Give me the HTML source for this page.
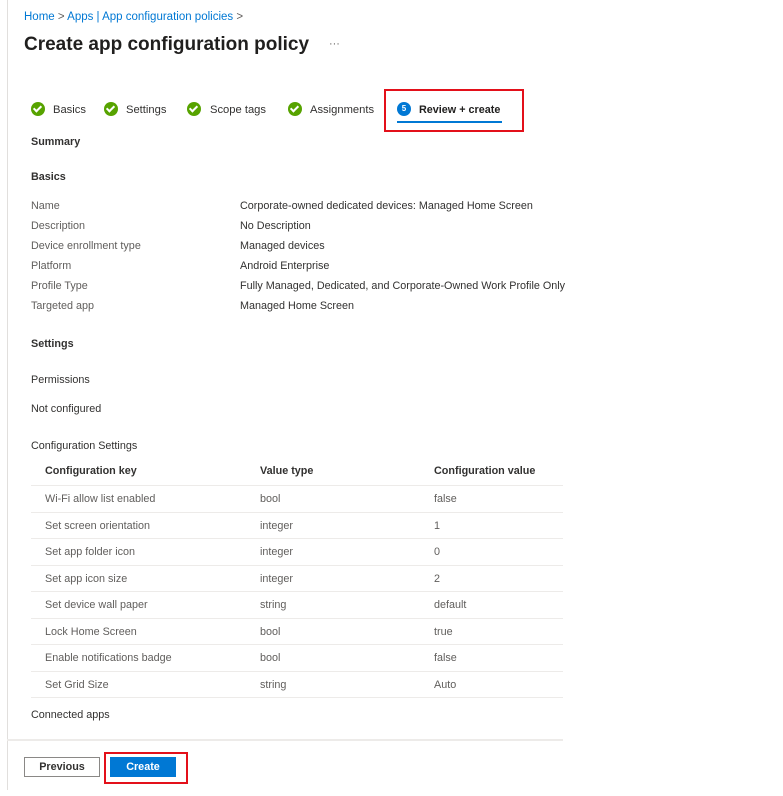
<!DOCTYPE html><html><head><style>
body{margin:0;width:783px;height:796px;background:#fff;font-family:"Liberation Sans",sans-serif;color:#323130;position:relative;overflow:hidden}
.a{position:absolute;white-space:nowrap;font-size:10.8px;line-height:14px}
.b{font-weight:bold}
.g{color:#605e5c}
.chk{position:absolute;width:14px;height:14px;border-radius:50%;background:#57a300}
.chk:after{content:"";position:absolute;left:4px;top:2px;width:3px;height:6px;border:solid #fff;border-width:0 2px 2px 0;transform:rotate(45deg)}
.line{position:absolute;height:1px;background:#edebe9;left:31px;width:532px}
.t{font-size:11.2px}
</style></head><body>
<div style="position:absolute;left:7px;top:0;width:1px;height:790px;background:#e1dfdd"></div>
<div class="a" style="left:24px;top:10px;font-size:11.5px;color:#0078d4">Home <span style="color:#605e5c">&gt;</span> Apps | App configuration policies <span style="color:#605e5c">&gt;</span></div>
<div class="a" style="left:24px;top:33px;font-size:19px;line-height:24px;font-weight:600;color:#201f1e">Create app configuration policy</div>
<div class="a" style="left:329px;top:37px;color:#605e5c">···</div>

<div class="chk" style="left:31px;top:102px"></div><div class="a t" style="left:53px;top:103px">Basics</div>
<div class="chk" style="left:104px;top:102px"></div><div class="a t" style="left:126px;top:103px">Settings</div>
<div class="chk" style="left:187px;top:102px"></div><div class="a t" style="left:210px;top:103px">Scope tags</div>
<div class="chk" style="left:288px;top:102px"></div><div class="a t" style="left:310px;top:103px">Assignments</div>
<div style="position:absolute;left:397px;top:102px;width:14px;height:14px;border-radius:50%;background:#0078d4;color:#fff;font-size:8px;line-height:14px;text-align:center;font-weight:bold">5</div>
<div class="a t" style="left:419px;top:103px;font-weight:bold;color:#201f1e;font-size:10.8px">Review + create</div>
<div style="position:absolute;left:397px;top:121px;width:105px;height:2px;background:#0078d4"></div>
<div style="position:absolute;left:384px;top:89px;width:140px;height:43px;border:2px solid #e3101a;box-sizing:border-box"></div>

<div class="a b" style="left:31px;top:135px">Summary</div>
<div class="a b" style="left:31px;top:170px">Basics</div>
<div class="a g" style="left:31px;top:199px">Name</div><div class="a" style="left:240px;top:199px">Corporate-owned dedicated devices: Managed Home Screen</div>
<div class="a g" style="left:31px;top:219px">Description</div><div class="a" style="left:240px;top:219px">No Description</div>
<div class="a g" style="left:31px;top:239px">Device enrollment type</div><div class="a" style="left:240px;top:239px">Managed devices</div>
<div class="a g" style="left:31px;top:259px">Platform</div><div class="a" style="left:240px;top:259px">Android Enterprise</div>
<div class="a g" style="left:31px;top:279px">Profile Type</div><div class="a" style="left:240px;top:279px">Fully Managed, Dedicated, and Corporate-Owned Work Profile Only</div>
<div class="a g" style="left:31px;top:299px">Targeted app</div><div class="a" style="left:240px;top:299px">Managed Home Screen</div>
<div class="a b" style="left:31px;top:337px">Settings</div>
<div class="a" style="left:31px;top:373px">Permissions</div>
<div class="a" style="left:31px;top:402px">Not configured</div>
<div class="a" style="left:31px;top:439px">Configuration Settings</div>

<div class="a b" style="left:45px;top:464px">Configuration key</div><div class="a b" style="left:260px;top:464px">Value type</div><div class="a b" style="left:434px;top:464px">Configuration value</div>
<div class="line" style="top:485px"></div>
<div class="a g" style="left:45px;top:492px">Wi-Fi allow list enabled</div><div class="a g" style="left:260px;top:492px">bool</div><div class="a g" style="left:434px;top:492px">false</div>
<div class="line" style="top:512px"></div>
<div class="a g" style="left:45px;top:519px">Set screen orientation</div><div class="a g" style="left:260px;top:519px">integer</div><div class="a g" style="left:434px;top:519px">1</div>
<div class="line" style="top:538px"></div>
<div class="a g" style="left:45px;top:545px">Set app folder icon</div><div class="a g" style="left:260px;top:545px">integer</div><div class="a g" style="left:434px;top:545px">0</div>
<div class="line" style="top:565px"></div>
<div class="a g" style="left:45px;top:572px">Set app icon size</div><div class="a g" style="left:260px;top:572px">integer</div><div class="a g" style="left:434px;top:572px">2</div>
<div class="line" style="top:591px"></div>
<div class="a g" style="left:45px;top:598px">Set device wall paper</div><div class="a g" style="left:260px;top:598px">string</div><div class="a g" style="left:434px;top:598px">default</div>
<div class="line" style="top:618px"></div>
<div class="a g" style="left:45px;top:625px">Lock Home Screen</div><div class="a g" style="left:260px;top:625px">bool</div><div class="a g" style="left:434px;top:625px">true</div>
<div class="line" style="top:644px"></div>
<div class="a g" style="left:45px;top:651px">Enable notifications badge</div><div class="a g" style="left:260px;top:651px">bool</div><div class="a g" style="left:434px;top:651px">false</div>
<div class="line" style="top:671px"></div>
<div class="a g" style="left:45px;top:678px">Set Grid Size</div><div class="a g" style="left:260px;top:678px">string</div><div class="a g" style="left:434px;top:678px">Auto</div>
<div class="line" style="top:697px"></div>
<div class="a" style="left:31px;top:708px">Connected apps</div>

<div style="position:absolute;left:7px;top:739px;width:556px;height:2px;background:#edebe9"></div>
<div style="position:absolute;left:24px;top:757px;width:76px;height:20px;border:1px solid #8a8886;box-sizing:border-box;font-size:10.8px;line-height:18px;text-align:center;font-weight:bold">Previous</div>
<div style="position:absolute;left:110px;top:757px;width:66px;height:20px;background:#0078d4;color:#fff;font-size:10.8px;line-height:20px;text-align:center;font-weight:bold">Create</div>
<div style="position:absolute;left:104px;top:752px;width:84px;height:32px;border:2px solid #e3101a;box-sizing:border-box"></div>
</body></html>
